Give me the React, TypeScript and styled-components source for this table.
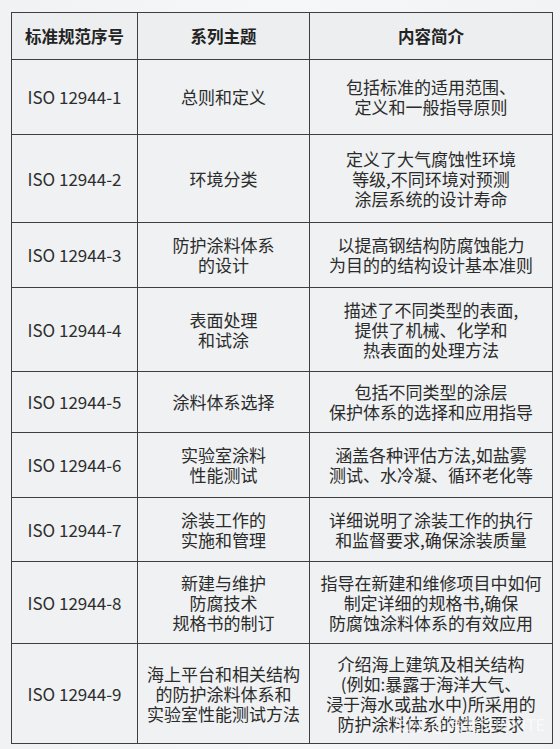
import styled, { createGlobalStyle } from 'styled-components';

const GlobalStyle = createGlobalStyle`
  html, body {
    margin: 0;
    padding: 0;
    background: #f3f4f5;
  }
  body {
    font-family: "Noto Sans CJK SC", "Noto Sans", sans-serif;
    color: #2b2b2b;
  }
`;

interface RowData {
  code: string;
  topic: string[];
  summary: string[];
  height: number;
}

const rows: RowData[] = [
  { code: 'ISO 12944-1', topic: ['总则和定义'], summary: ['包括标准的适用范围、', '定义和一般指导原则'], height: 75 },
  {
    code: 'ISO 12944-2',
    topic: ['环境分类'],
    summary: ['定义了大气腐蚀性环境', '等级,不同环境对预测', '涂层系统的设计寿命'],
    height: 88,
  },
  {
    code: 'ISO 12944-3',
    topic: ['防护涂料体系', '的设计'],
    summary: ['以提高钢结构防腐蚀能力', '为目的的结构设计基本准则'],
    height: 65,
  },
  {
    code: 'ISO 12944-4',
    topic: ['表面处理', '和试涂'],
    summary: ['描述了不同类型的表面,', '提供了机械、化学和', '热表面的处理方法'],
    height: 84,
  },
  {
    code: 'ISO 12944-5',
    topic: ['涂料体系选择'],
    summary: ['包括不同类型的涂层', '保护体系的选择和应用指导'],
    height: 61,
  },
  {
    code: 'ISO 12944-6',
    topic: ['实验室涂料', '性能测试'],
    summary: ['涵盖各种评估方法,如盐雾', '测试、水冷凝、循环老化等'],
    height: 65,
  },
  {
    code: 'ISO 12944-7',
    topic: ['涂装工作的', '实施和管理'],
    summary: ['详细说明了涂装工作的执行', '和监督要求,确保涂装质量'],
    height: 64,
  },
  {
    code: 'ISO 12944-8',
    topic: ['新建与维护', '防腐技术', '规格书的制订'],
    summary: ['指导在新建和维修项目中如何', '制定详细的规格书,确保', '防腐蚀涂料体系的有效应用'],
    height: 82,
  },
  {
    code: 'ISO 12944-9',
    topic: ['海上平台和相关结构', '的防护涂料体系和', '实验室性能测试方法'],
    summary: ['介绍海上建筑及相关结构', '(例如:暴露于海洋大气、', '浸于海水或盐水中)所采用的', '防护涂料体系的性能要求'],
    height: 100,
  },
];

const App = () => {
  return (
    <Page>
      <GlobalStyle />
      <Table>
        <colgroup>
          <col style={{ width: 126 }} />
          <col style={{ width: 172 }} />
          <col style={{ width: 243 }} />
        </colgroup>
        <thead>
          <Row height={47}>
            <HeadCell>标准规范序号</HeadCell>
            <HeadCell>系列主题</HeadCell>
            <HeadCell>内容简介</HeadCell>
          </Row>
        </thead>
        <tbody>
          {rows.map((row, index) => (
            <Row key={row.code} height={row.height}>
              <CodeCell>{row.code}</CodeCell>
              <Cell>
                {row.topic.map((line) => (
                  <Line key={line}>{line}</Line>
                ))}
              </Cell>
              <Cell>
                {row.summary.map((line) => (
                  <Line key={line}>{line}</Line>
                ))}
                {index === rows.length - 1 && <Watermark>知乎 @涂装SUNKITE</Watermark>}
              </Cell>
            </Row>
          ))}
        </tbody>
      </Table>
    </Page>
  );
};

const Page = styled.div`
  width: 560px;
  height: 749px;
  box-sizing: border-box;
  padding: 12px 0 0 11px;
  background: linear-gradient(90deg, #f1f2f3 0%, #f6f7f8 50%, #f2f3f4 100%);
  overflow: hidden;
`;

const Table = styled.table`
  border-collapse: collapse;
  table-layout: fixed;
  width: 542px;
  background: #eff1f2;
  border: 1px solid #3f3f3f;
`;

const Row = styled.tr<{ height: number }>`
  height: ${({ height }) => height}px;
`;

const HeadCell = styled.th`
  border: 1px solid #3f3f3f;
  padding: 0;
  font-size: 16.5px;
  font-weight: 700;
  color: #232323;
  text-align: center;
  vertical-align: middle;
  background: #eceef0;
`;

const Cell = styled.td`
  position: relative;
  border: 1px solid #3f3f3f;
  padding: 0;
  font-size: 17px;
  line-height: 20px;
  color: #2b2b2b;
  text-align: center;
  vertical-align: middle;
`;

const CodeCell = styled(Cell)`
  color: #2e2e2e;
`;

const Line = styled.div`
  white-space: nowrap;
`;

const Watermark = styled.span`
  position: absolute;
  right: 7px;
  bottom: 9px;
  font-size: 16px;
  line-height: 20px;
  color: rgba(255, 255, 255, 0.7);
  white-space: nowrap;
  pointer-events: none;
`;

export default App;
